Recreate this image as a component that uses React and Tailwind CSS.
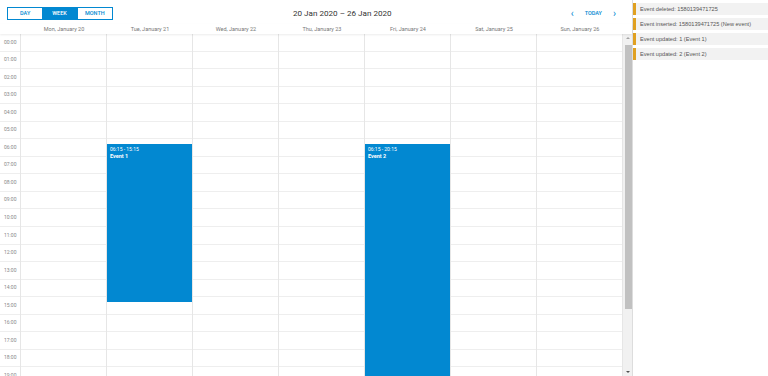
const days = [
  "Mon, January 20",
  "Tue, January 21",
  "Wed, January 22",
  "Thu, January 23",
  "Fri, January 24",
  "Sat, January 25",
  "Sun, January 26",
];

const hours = Array.from({ length: 24 }, (_, i) => String(i).padStart(2, "0") + ":00");

const ROW = 17.55;

const events = [
  { day: 1, start: 6.25, end: 15.25, time: "06:15 - 15:15", title: "Event 1" },
  { day: 4, start: 6.25, end: 20.25, time: "06:15 - 20:15", title: "Event 2" },
];

const log = [
  "Event deleted: 1580139471725",
  "Event inserted: 1580139471725 (New event)",
  "Event updated: 1 (Event 1)",
  "Event updated: 2 (Event 2)",
];

function Toolbar() {
  return (
    <div className="flex h-[24px] items-start px-[7px] pt-[7px]">
      <div className="flex h-[13px] w-[106px] border border-[#0288d1] text-[5.5px] font-medium">
        <button className="flex flex-1 items-center justify-center uppercase text-[#0288d1]">Day</button>
        <button className="flex flex-1 items-center justify-center bg-[#0288d1] uppercase text-white">Week</button>
        <button className="flex flex-1 items-center justify-center border-l border-[#0288d1] uppercase text-[#0288d1]">Month</button>
      </div>
      <div className="flex flex-1 justify-center pl-[1px] text-[8.1px] leading-[13px] text-[#333]">
        20 Jan 2020 – 26 Jan 2020
      </div>
      <div className="mr-[9px] flex h-[13px] items-center gap-[11px] text-[#0288d1]">
        <span className="text-[10px] leading-none">‹</span>
        <span className="text-[5.5px] font-medium">TODAY</span>
        <span className="text-[10px] leading-none">›</span>
      </div>
    </div>
  );
}

function Scrollbar() {
  return (
    <div className="flex w-[10px] shrink-0 flex-col items-center bg-[#f1f1f1]">
      <div className="mt-[3px] h-0 w-0 border-x-[2px] border-b-[2px] border-x-transparent border-b-[#a3a3a3]" />
      <div className="mt-[6px] h-[264px] w-[7px] bg-[#c1c1c1]" />
      <div className="flex-1" />
      <div className="mb-[3px] h-0 w-0 border-x-[2px] border-t-[2px] border-x-transparent border-t-[#505050]" />
    </div>
  );
}

export default function App() {
  return (
    <div className="flex h-[376px] w-[768px] overflow-hidden bg-white font-['Roboto',sans-serif]">
      <div className="flex w-[632px] flex-col">
        <Toolbar />
        <div className="relative z-10 flex h-[10px] shadow-[0_1px_2px_rgba(0,0,0,0.08)]">
          <div className="w-[21px]" />
          {days.map((d) => (
            <div key={d} className="flex w-[86px] items-start justify-center pt-[1px] text-[5.5px] leading-[8px] text-[#777]">
              {d}
            </div>
          ))}
        </div>
        <div className="flex flex-1 overflow-hidden">
          <div className="flex flex-1">
            <div className="flex w-[21px] shrink-0 flex-col border-r border-[#e6e6e6]">
              {hours.map((h) => (
                <div key={h} className="flex h-[17.55px] shrink-0 items-center border-b border-[#eeeeee] pl-[4px] text-[5px] text-[#888]">
                  {h}
                </div>
              ))}
            </div>
            {days.map((d, i) => (
              <div key={d} className="relative flex w-[86px] shrink-0 flex-col border-r border-[#e6e6e6]">
                {hours.map((h) => (
                  <div key={h} className="h-[17.55px] shrink-0 border-b border-[#eeeeee]" />
                ))}
                {events
                  .filter((e) => e.day === i)
                  .map((e) => (
                    <div
                      key={e.title}
                      className="absolute left-[0px] right-[0px] bg-[#0288d1] px-[3px] pt-[2px] text-white"
                      style={{ top: e.start * ROW, height: (e.end - e.start) * ROW }}
                    >
                      <div className="text-[5px] leading-[7px]">{e.time}</div>
                      <div className="text-[5.5px] font-bold leading-[7px]">{e.title}</div>
                    </div>
                  ))}
              </div>
            ))}
          </div>
          <Scrollbar />
        </div>
      </div>
      <div className="flex flex-1 flex-col gap-[3px] border-l border-[#dddddd] pt-[3px] font-['Liberation_Sans',Arial,sans-serif]">
        {log.map((l) => (
          <div key={l} className="flex h-[12px] items-center border-l-[3px] border-[#e0a020] bg-[#f2f2f2] pl-[4px] text-[5.6px] text-[#555]">
            {l}
          </div>
        ))}
      </div>
    </div>
  );
}
